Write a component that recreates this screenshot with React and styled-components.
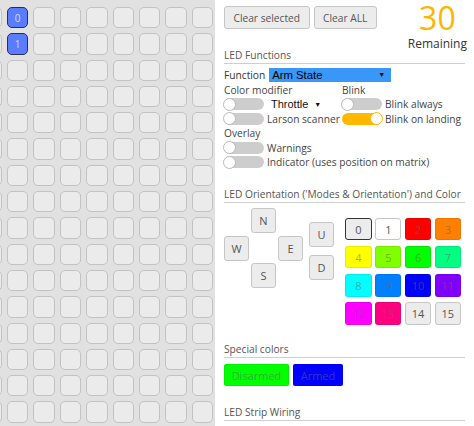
import React from 'react';
import styled, { createGlobalStyle } from 'styled-components';

const GlobalStyle = createGlobalStyle`
  html, body {
    margin: 0;
    padding: 0;
    background: #fff;
    overflow: hidden;
  }
  body {
    font-family: "Open Sans", "Liberation Sans", sans-serif;
    color: #333;
  }
`;

const ROWS = 16;
const COLS = 9; // first column is scrolled almost out of view

const SWATCHES = [
    { n: 0, bg: '#ececec', light: true, selected: true },
    { n: 1, bg: '#ffffff', light: true },
    { n: 2, bg: '#ff0000' },
    { n: 3, bg: '#ff8000' },
    { n: 4, bg: '#ffff00' },
    { n: 5, bg: '#80ff00' },
    { n: 6, bg: '#00ff00' },
    { n: 7, bg: '#00ff80' },
    { n: 8, bg: '#00ffff' },
    { n: 9, bg: '#0080ff' },
    { n: 10, bg: '#0000ff' },
    { n: 11, bg: '#8000ff' },
    { n: 12, bg: '#ff00ff' },
    { n: 13, bg: '#ff0080' },
    { n: 14, bg: '#ececec', light: true },
    { n: 15, bg: '#ececec', light: true },
];

// leds placed on the matrix: key = "row-col"
const placed = { '0-1': 0, '1-1': 1 };

const Toggle = ({ on }) => (
    <Switch on={on ? 1 : 0}>
        <Knob on={on ? 1 : 0} />
    </Switch>
);

const App = () => {
    const cells = [];
    for (let r = 0; r < ROWS; r++) {
        for (let c = 0; c < COLS; c++) {
            const idx = placed[`${r}-${c}`];
            cells.push(
                <Cell key={`${r}-${c}`} active={idx !== undefined ? 1 : 0}>
                    {idx !== undefined ? idx : ''}
                </Cell>
            );
        }
    }

    return (
        <>
            <GlobalStyle />
            <Page>
                <Matrix>
                    <MatrixGrid>{cells}</MatrixGrid>
                </Matrix>

                <Side>
                    <TopRow>
                        <Buttons>
                            <Button>Clear selected</Button>
                            <Button>Clear ALL</Button>
                        </Buttons>
                        <Remaining>
                            <Count>30</Count>
                            <CountLabel>Remaining</CountLabel>
                        </Remaining>
                    </TopRow>

                    <Heading>LED Functions</Heading>
                    <FunctionRow>
                        <span>Function</span>
                        <FakeSelect>
                            Arm State
                            <Arrow>▼</Arrow>
                        </FakeSelect>
                    </FunctionRow>

                    <Columns>
                        <Column width="118px">
                            <Line>Color modifier</Line>
                            <Line>
                                <Toggle />
                                <Throttle>
                                    Throttle <SmallArrow>▼</SmallArrow>
                                </Throttle>
                            </Line>
                            <Line>
                                <Toggle />
                                <span>Larson scanner</span>
                            </Line>
                        </Column>
                        <Column>
                            <Line>Blink</Line>
                            <Line>
                                <Toggle />
                                <span>Blink always</span>
                            </Line>
                            <Line>
                                <Toggle on />
                                <span>Blink on landing</span>
                            </Line>
                        </Column>
                    </Columns>
                    <Line>Overlay</Line>
                    <Line>
                        <Toggle />
                        <span>Warnings</span>
                    </Line>
                    <Line>
                        <Toggle />
                        <span>Indicator (uses position on matrix)</span>
                    </Line>

                    <Heading space="19px">LED Orientation ('Modes &amp; Orientation') and Color</Heading>
                    <OrientRow>
                        <DPad>
                            <DirButton col={2} row={1}>N</DirButton>
                            <DirButton col={1} row={2}>W</DirButton>
                            <DirButton col={3} row={2}>E</DirButton>
                            <DirButton col={2} row={3}>S</DirButton>
                        </DPad>
                        <UpDown>
                            <DirButton>U</DirButton>
                            <DirButton>D</DirButton>
                        </UpDown>
                        <Swatches>
                            {SWATCHES.map(s => (
                                <Swatch
                                    key={s.n}
                                    bg={s.bg}
                                    light={s.light ? 1 : 0}
                                    selected={s.selected ? 1 : 0}
                                >
                                    {s.n}
                                </Swatch>
                            ))}
                        </Swatches>
                    </OrientRow>

                    <Heading space="18px">Special colors</Heading>
                    <SpecialRow>
                        <Special bg="#00ff00" w="65px">Disarmed</Special>
                        <Special bg="#0000ff" w="50px">Armed</Special>
                    </SpecialRow>

                    <Heading space="20px">LED Strip Wiring</Heading>
                </Side>
            </Page>
        </>
    );
};

export default App;

const Page = styled.div`
    display: flex;
    width: 474px;
    height: 426px;
    overflow: hidden;
`;

// 왼쪽 LED 매트릭스
const Matrix = styled.div`
    flex: 0 0 215px;
    height: 426px;
    background: #e1e1e1;
    overflow: hidden;
`;

const MatrixGrid = styled.div`
    display: grid;
    grid-template-columns: repeat(${COLS}, 21.4px);
    grid-auto-rows: 21.3px;
    gap: 5px;
    padding-top: 7px;
    margin-left: -19.4px;
`;

const Cell = styled.div`
    box-sizing: border-box;
    border-radius: 5px;
    border: ${({ active }) => active ? '1.5px solid #2c2c58' : '1px solid #c2c2c2'};
    background: ${({ active }) => active ? '#5a7dff' : '#ebebeb'};
    color: #cfdcff;
    font-size: 10px;
    display: flex;
    align-items: center;
    justify-content: center;
`;

// 오른쪽 설정 패널
const Side = styled.div`
    flex: 0 0 243px;
    margin-left: 9px;
    font-size: 10.2px;
    color: #444;
`;

const TopRow = styled.div`
    display: flex;
    justify-content: space-between;
    align-items: flex-start;
    height: 49.4px;
`;

const Buttons = styled.div`
    display: flex;
    gap: 4px;
    margin-top: 6px;
`;

const Button = styled.div`
    box-sizing: border-box;
    height: 23px;
    padding: 0 8.5px;
    display: flex;
    align-items: center;
    background: #ececec;
    border: 1px solid #c6c6c6;
    border-radius: 3px;
    color: #555;
    font-size: 10.2px;
`;

const Remaining = styled.div`
    display: flex;
    flex-direction: column;
    align-items: center;
    margin-top: 0.4px;
`;

const Count = styled.div`
    font-size: 32px;
    line-height: 36px;
    color: #fbb600;
`;

const CountLabel = styled.div`
    margin-top: 1px;
    font-size: 12px;
    line-height: 14px;
    color: #333;
`;

const Heading = styled.div`
    margin-top: ${({ space }) => space || '0'};
    margin-right: 2px;
    font-size: 10.2px;
    line-height: 13px;
    padding-bottom: 1px;
    color: #555;
    white-space: nowrap;
    border-bottom: 1px solid #cfcfcf;
`;

const FunctionRow = styled.div`
    display: flex;
    align-items: center;
    gap: 4px;
    height: 14px;
    margin-top: 4px;
    color: #333;
`;

const FakeSelect = styled.div`
    position: relative;
    box-sizing: border-box;
    width: 122px;
    height: 14px;
    padding-left: 3px;
    background: #3897f7;
    color: #000;
    font-family: "Liberation Sans", Arial, sans-serif;
    font-size: 11.3px;
    line-height: 14px;
`;

const Arrow = styled.span`
    position: absolute;
    right: 6px;
    top: 0;
    font-size: 7px;
`;

const Columns = styled.div`
    display: flex;
`;

const Column = styled.div`
    flex: 0 0 ${({ width }) => width || 'auto'};
`;

const Line = styled.div`
    display: flex;
    align-items: center;
    gap: 3px;
    height: 14.5px;
    white-space: nowrap;
    color: #444;
`;

const Throttle = styled.span`
    padding-left: 4px;
    font-family: "Liberation Sans", Arial, sans-serif;
    font-size: 11px;
    color: #111;
`;

const SmallArrow = styled.span`
    font-size: 7px;
    margin-left: 3px;
    vertical-align: 1px;
`;

const Switch = styled.span`
    position: relative;
    flex: 0 0 40px;
    height: 12px;
    border-radius: 6px;
    background: ${({ on }) => on ? '#ffb700' : '#cdcdcd'};
`;

const Knob = styled.span`
    position: absolute;
    top: -0.5px;
    ${({ on }) => on ? 'right: -1px;' : 'left: -1px;'}
    box-sizing: border-box;
    width: 13px;
    height: 13px;
    border-radius: 50%;
    background: #fff;
    border: 1px solid ${({ on }) => on ? '#ffb700' : '#b9b9b9'};
`;

const OrientRow = styled.div`
    display: flex;
    align-items: flex-start;
    margin-top: 5px;
`;

const DPad = styled.div`
    display: grid;
    grid-template-columns: repeat(3, 25px);
    grid-template-rows: repeat(3, 25px);
    column-gap: 2px;
    row-gap: 2.5px;
`;

const UpDown = styled.div`
    display: flex;
    flex-direction: column;
    gap: 8px;
    margin-left: 6px;
    margin-top: 14px;
`;

const DirButton = styled.div`
    box-sizing: border-box;
    width: 25px;
    height: 25px;
    grid-column: ${({ col }) => col || 'auto'};
    grid-row: ${({ row }) => row || 'auto'};
    display: flex;
    align-items: center;
    justify-content: center;
    background: #ececec;
    border: 1px solid #c6c6c6;
    border-radius: 3px;
    color: #555;
    font-size: 11px;
`;

const Swatches = styled.div`
    display: grid;
    grid-template-columns: repeat(4, 26.4px);
    grid-auto-rows: 22.7px;
    column-gap: 3.4px;
    row-gap: 5.4px;
    margin-left: 11.3px;
    margin-top: 9.3px;
`;

const Swatch = styled.div`
    box-sizing: border-box;
    display: flex;
    align-items: center;
    justify-content: center;
    border-radius: 3px;
    background: ${({ bg }) => bg};
    border: ${({ selected, light }) =>
        selected ? '1.5px solid #333' : light ? '1px solid #c6c6c6' : '1px solid rgba(0,0,0,0.08)'};
    color: ${({ light }) => light ? '#555' : 'rgba(100,100,100,0.55)'};
    font-size: 11px;
`;

const SpecialRow = styled.div`
    display: flex;
    gap: 4px;
    margin-top: 6.5px;
`;

const Special = styled.div`
    box-sizing: border-box;
    width: ${({ w }) => w};
    height: 22px;
    display: flex;
    align-items: center;
    justify-content: center;
    border-radius: 2px;
    background: ${({ bg }) => bg};
    border: 1px solid rgba(0,0,0,0.06);
    color: rgba(100,100,100,0.55);
    font-size: 11px;
`;
